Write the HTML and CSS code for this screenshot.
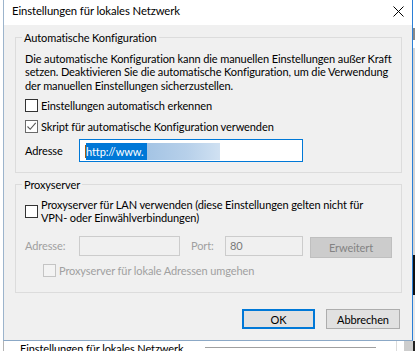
FILE: index.html
```html
<!DOCTYPE html>
<html lang="de">
<head>
<meta charset="utf-8">
<title>Einstellungen für lokales Netzwerk</title>
<link rel="stylesheet" href="styles.css">
</head>
<body>
<div class="screen">
  <div class="window">
    <div class="titlebar">
      <span class="title">Einstellungen für lokales Netzwerk</span>
      <svg class="close" width="11" height="11" viewBox="0 0 11 11"><path d="M0.5 0.5 L10.5 10.5 M10.5 0.5 L0.5 10.5" stroke="#000" stroke-width="1" fill="none"/></svg>
    </div>
    <div class="body">
      <div class="group g1">
        <span class="legend">Automatische Konfiguration</span>
        <p class="desc">Die automatische Konfiguration kann die manuellen Einstellungen außer Kraft<br>setzen. Deaktivieren Sie die automatische Konfiguration, um die Verwendung<br>der manuellen Einstellungen sicherzustellen.</p>
        <div class="check r1"><span class="box"></span><span class="lbl">Einstellungen automatisch erkennen</span></div>
        <div class="check r2"><span class="box checked"><svg width="11" height="11" viewBox="0 0 11 11"><path d="M1.5 5.5 L4.2 8.3 L9.7 1.8" stroke="#555" stroke-width="1.1" fill="none"/></svg></span><span class="lbl">Skript für automatische Konfiguration verwenden</span></div>
        <div class="addr-row">
          <span class="addr-label">Adresse</span>
          <div class="textbox focus"><span class="caret"></span><span class="sel">http://www.</span><span class="redact"></span></div>
        </div>
      </div>
      <div class="group g2">
        <span class="legend">Proxyserver</span>
        <div class="check r3"><span class="box"></span><span class="lbl two">Proxyserver für LAN verwenden (diese Einstellungen gelten nicht für<br>VPN- oder Einwählverbindungen)</span></div>
        <div class="proxy-row">
          <span class="addr-label disabled">Adresse:</span>
          <div class="textbox off addr"></div>
          <span class="port-label disabled">Port:</span>
          <div class="textbox off port"><span class="val">80</span></div>
          <div class="btn off adv">Erweitert</div>
        </div>
        <div class="check r4"><span class="box off"></span><span class="lbl disabled">Proxyserver für lokale Adressen umgehen</span></div>
      </div>
      <div class="buttons">
        <div class="btn default">OK</div>
        <div class="btn">Abbrechen</div>
      </div>
    </div>
  </div>
  <div class="strip"></div>
  <div class="below">
    <span class="below-text">Einstellungen für lokales Netzwerk</span>
    <span class="hline"></span>
    <span class="vline"></span>
    <span class="scroll"></span>
  </div>
</div>
</body>
</html>
```
FILE: styles.css
```css
html, body {
  margin: 0;
  padding: 0;
  background: #fff;
}
body {
  font-family: Lato, "Liberation Sans", sans-serif;
  font-size: 11px;
  letter-spacing: -0.1px;
  color: #000;
}
.screen {
  display: grid;
  grid-template-columns: 3px 410px 2px;
  grid-template-rows: 341px 10px;
  width: 415px;
  height: 351px;
  overflow: hidden;
  background: #fff;
}
.window {
  grid-column: 2;
  grid-row: 1;
  display: flex;
  flex-direction: column;
  box-sizing: border-box;
  border-left: 1px solid #9cb4cc;
  border-right: 1px solid #2b7fd6;
  border-bottom: 1px solid #8ba8c6;
  background: #f0f0f0;
}
.titlebar {
  height: 25px;
  flex: none;
  display: flex;
  align-items: flex-start;
  background: #fff;
  padding-left: 8px;
}
.title {
  line-height: 22px;
  font-size: 11.3px;
  white-space: nowrap;
}
.close {
  margin-left: auto;
  margin-right: 8px;
  margin-top: 6px;
}
.body {
  flex: 1;
  display: flex;
  flex-direction: column;
  padding: 12px 10px 0 11px;
}
.group {
  position: relative;
  box-sizing: border-box;
  border: 1px solid #dcdcdc;
  padding: 0 9px;
  display: flex;
  flex-direction: column;
}
.g1 {
  height: 136px;
  padding-top: 14px;
  margin-bottom: 11px;
}
.g2 {
  height: 109px;
  padding-top: 13px;
}
.legend {
  position: absolute;
  top: -7px;
  left: 6px;
  padding: 0 2px;
  background: #f0f0f0;
  line-height: 13.3px;
  white-space: nowrap;
}
.desc {
  margin: 0;
  line-height: 13.3px;
  white-space: nowrap;
}
.check {
  display: flex;
  align-items: center;
  gap: 3px;
}
.lbl {
  line-height: 13px;
  white-space: nowrap;
}
.lbl.two {
  line-height: 13.3px;
}
.r1 { margin-top: 7px; }
.r2 { margin-top: 8px; }
.box {
  width: 13px;
  height: 13px;
  box-sizing: border-box;
  border: 1px solid #333;
  background: #fff;
  flex: none;
  display: flex;
  align-items: center;
  justify-content: center;
}
.box.checked {
  border-color: #6a6a6a;
}
.box.off {
  border-color: #c4c4c4;
  background: #f3f3f3;
}
.addr-row {
  margin-top: 6px;
  display: flex;
  align-items: center;
}
.addr-label {
  width: 54px;
  flex: none;
}
.textbox {
  box-sizing: border-box;
  background: #fff;
  flex: none;
}
.textbox.focus {
  width: 224px;
  height: 23px;
  border: 1px solid #0078d7;
  display: flex;
  align-items: flex-start;
  padding: 3px 0 0 5px;
}
.caret {
  width: 1px;
  height: 13px;
  margin-top: 2px;
  background: #a85a10;
  flex: none;
}
.sel {
  background: #0078d7;
  color: #fff;
  height: 17px;
  line-height: 17px;
  padding: 0 3px 0 0;
  white-space: nowrap;
}
.redact {
  width: 73px;
  height: 17px;
  background: linear-gradient(90deg, #a4c4e4 0%, #b7d0ea 55%, #d0e1f2 100%);
}
.r3 {
  margin-top: 0;
}
.proxy-row {
  margin-top: 11px;
  display: flex;
  align-items: flex-start;
  height: 22px;
}
.proxy-row .addr-label,
.proxy-row .port-label {
  line-height: 20px;
}
.disabled {
  color: #a0a0a0;
}
.textbox.off {
  height: 20px;
  border: 1px solid #cccccc;
  background: #f0f0f0;
}
.textbox.addr {
  width: 101px;
}
.port-label {
  width: 34px;
  margin-left: 11px;
  flex: none;
}
.textbox.port {
  width: 78px;
  padding-left: 4px;
  line-height: 18px;
  color: #7a7a7a;
}
.btn {
  box-sizing: border-box;
  display: flex;
  align-items: center;
  justify-content: center;
  background: #e1e1e1;
  border: 1px solid #adadad;
  width: 74px;
  height: 20px;
  white-space: nowrap;
  flex: none;
}
.btn.adv {
  width: 82px;
  height: 21px;
  margin-left: 7px;
  margin-top: 1px;
  background: #cccccc;
  border-color: #bfbfbf;
  color: #838383;
}
.r4 {
  margin-top: 6px;
  margin-left: 18px;
}
.buttons {
  display: flex;
  justify-content: flex-end;
  gap: 11px;
  margin-top: 16px;
  margin-right: 2px;
}
.btn.default {
  width: 73px;
  border: 2px solid #0078d7;
}
.strip {
  grid-column: 3;
  grid-row: 1 / 3;
  background: linear-gradient(180deg, #ffffff 0, #ffffff 28px, #8a8a8a 28px, #8a8a8a 40px, #ffffff 40px, #ffffff 48px, #d4d4d4 48px, #d4d4d4 255px, #111 255px, #111 295px, #e8e8e8 295px, #e8e8e8 341px, #222 341px);
}
.below {
  grid-column: 2;
  grid-row: 2;
  display: flex;
  align-items: flex-start;
  border-left: 1px solid #b4b4b4;
  box-sizing: border-box;
  overflow: hidden;
}
.below-text {
  margin-left: 16px;
  margin-top: 0;
  line-height: 16px;
  white-space: nowrap;
}
.hline {
  margin-left: auto;
  width: 171px;
  height: 1px;
  margin-top: 6px;
  background: #a0a0a0;
}
.vline {
  margin-left: 20px;
  width: 1px;
  height: 10px;
  background: #dcdcdc;
}
.scroll {
  margin-left: 7px;
  width: 9px;
  height: 10px;
  background: #cdcdcd;
}
```
